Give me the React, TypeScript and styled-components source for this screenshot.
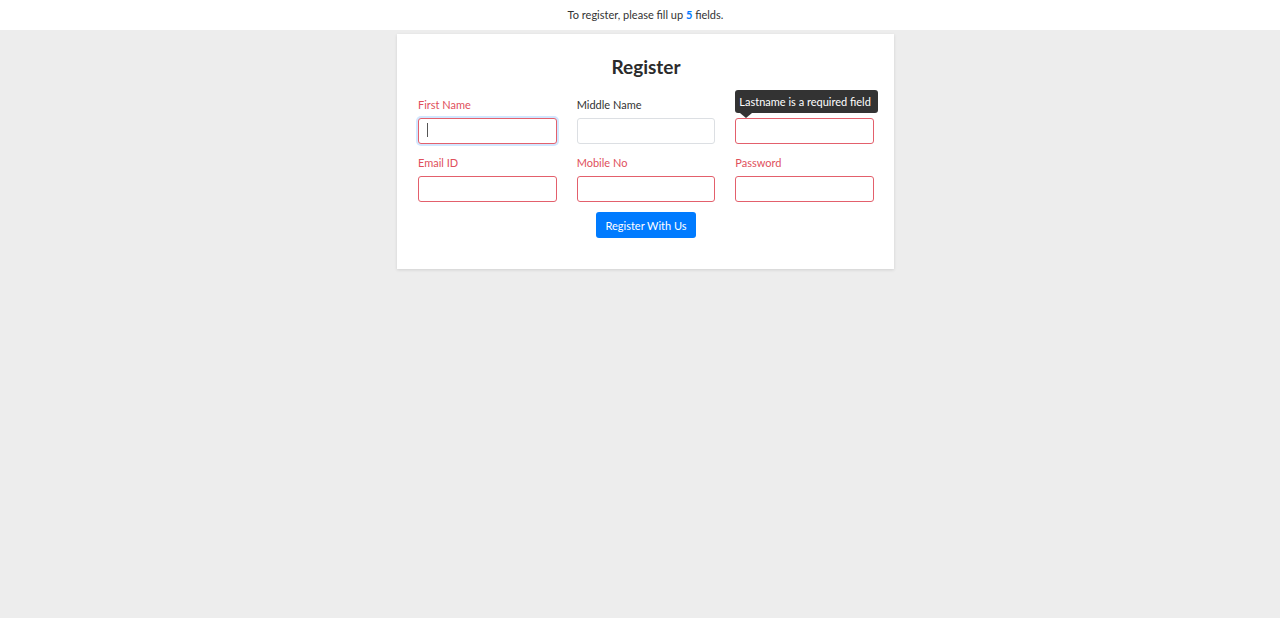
import React from 'react';
import styled, { createGlobalStyle } from 'styled-components';

const GlobalStyle = createGlobalStyle`
  html, body {
    margin: 0;
    padding: 0;
    background: #ededed;
    font-family: Lato, 'Noto Sans', sans-serif;
    color: #333;
  }
  * {
    box-sizing: border-box;
  }
`;

const Page = styled.div`
  min-height: 618px;
  background: #ededed;
`;

const TopBar = styled.div`
  height: 30px;
  line-height: 30px;
  background: #fff;
  text-align: center;
  font-size: 11px;
  color: #333;
  padding-left: 11px;
`;

const Count = styled.b`
  color: #007bff;
`;

const Main = styled.div`
  display: flex;
  justify-content: center;
  padding: 4px 0 0 11px;
`;

const Card = styled.form`
  width: 497px;
  background: #fff;
  padding: 21px 20px 31px 21px;
  box-shadow: 0 1px 3px rgba(0, 0, 0, 0.12);
  display: flex;
  flex-direction: column;
  align-items: center;
`;

const Title = styled.h2`
  margin: 0 0 19px;
  font-size: 19px;
  line-height: 24px;
  font-weight: 700;
  color: #2b2b2b;
`;

const Grid = styled.div`
  width: 100%;
  display: grid;
  grid-template-columns: repeat(3, 1fr);
  column-gap: 20px;
  row-gap: 12px;
`;

const Field = styled.div`
  position: relative;
  display: flex;
  flex-direction: column;
`;

const Label = styled.label<{ $invalid?: boolean }>`
  font-size: 11px;
  line-height: 14px;
  margin-bottom: 6px;
  color: ${({ $invalid }) => ($invalid ? '#e0505c' : '#333')};
`;

const Input = styled.input<{ $invalid?: boolean; $focused?: boolean }>`
  height: 26px;
  width: 100%;
  border: 1px solid ${({ $invalid }) => ($invalid ? '#e3606c' : '#dcdfe3')};
  border-radius: 3px;
  background: #fff;
  padding: 0 8px;
  font-size: 11px;
  font-family: inherit;
  outline: none;
  box-shadow: ${({ $focused }) => ($focused ? '0 0 0 2px rgba(0, 123, 255, 0.18)' : 'none')};
`;

const Caret = styled.span`
  position: absolute;
  left: 9px;
  top: 25px;
  width: 1px;
  height: 14px;
  background: #555;
`;

const Tooltip = styled.div`
  position: absolute;
  left: 0;
  top: -8px;
  width: 143px;
  height: 23px;
  background: #333;
  color: #fff;
  font-size: 11px;
  line-height: 23px;
  padding-left: 4px;
  border-radius: 3px;
  white-space: nowrap;

  &::after {
    content: '';
    position: absolute;
    left: 5px;
    top: 23px;
    border-left: 6px solid transparent;
    border-right: 6px solid transparent;
    border-top: 5px solid #333;
  }
`;

const SubmitButton = styled.button`
  margin-top: 10px;
  height: 26px;
  padding: 0 9px;
  border: none;
  border-radius: 3px;
  background: #007bff;
  color: #fff;
  font-family: inherit;
  font-size: 11px;
`;

interface FieldDef {
  label: string;
  invalid: boolean;
  type?: string;
}

const fields: FieldDef[] = [
  { label: 'First Name', invalid: true },
  { label: 'Middle Name', invalid: false },
  { label: 'Last Name', invalid: true },
  { label: 'Email ID', invalid: true },
  { label: 'Mobile No', invalid: true },
  { label: 'Password', invalid: true, type: 'password' },
];

export default function App() {
  return (
    <Page>
      <GlobalStyle />
      <TopBar>
        To register, please fill up <Count>5</Count> fields.
      </TopBar>
      <Main>
        <Card onSubmit={(e) => e.preventDefault()}>
          <Title>Register</Title>
          <Grid>
            {fields.map((f, i) => (
              <Field key={f.label}>
                <Label $invalid={f.invalid}>{f.label}</Label>
                <Input type={f.type || 'text'} $invalid={f.invalid} $focused={i === 0} />
                {i === 0 && <Caret />}
                {i === 2 && <Tooltip>Lastname is a required field</Tooltip>}
              </Field>
            ))}
          </Grid>
          <SubmitButton type="submit">Register With Us</SubmitButton>
        </Card>
      </Main>
    </Page>
  );
}
